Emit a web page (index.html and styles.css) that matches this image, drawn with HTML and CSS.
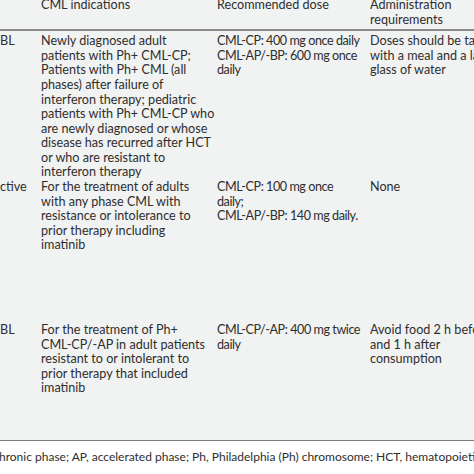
FILE: index.html
```html
<!DOCTYPE html>
<html lang="en">
<head>
<meta charset="utf-8">
<title>CML table</title>
<link rel="stylesheet" href="styles.css">
</head>
<body>
<div class="page">
  <div class="table">
    <div class="row head">
      <div class="cell"></div>
      <div class="cell">CML indications</div>
      <div class="cell">Recommended dose</div>
      <div class="cell">Administration<br>requirements</div>
    </div>
    <div class="row r1">
      <div class="cell">BL</div>
      <div class="cell">Newly diagnosed adult<br>patients with Ph+ CML-CP;<br>Patients with Ph+ CML (all<br>phases) after failure of<br>interferon therapy; pediatric<br>patients with Ph+ CML-CP who<br>are newly diagnosed or whose<br>disease has recurred after HCT<br>or who are resistant to<br>interferon therapy</div>
      <div class="cell dose">CML-CP: 400 mg once daily<br>CML-AP/-BP: 600 mg once<br>daily</div>
      <div class="cell">Doses should be taken<br>with a meal and a large<br>glass of water</div>
    </div>
    <div class="row r2">
      <div class="cell">ctive</div>
      <div class="cell">For the treatment of adults<br>with any phase CML with<br>resistance or intolerance to<br>prior therapy including<br>imatinib</div>
      <div class="cell dose">CML-CP: 100 mg once<br>daily;<br>CML-AP/-BP: 140 mg daily.</div>
      <div class="cell">None</div>
    </div>
    <div class="row r3">
      <div class="cell">BL</div>
      <div class="cell">For the treatment of Ph+<br>CML-CP/-AP in adult patients<br>resistant to or intolerant to<br>prior therapy that included<br>imatinib</div>
      <div class="cell dose">CML-CP/-AP: 400 mg twice<br>daily</div>
      <div class="cell">Avoid food 2 h before<br>and 1 h after<br>consumption</div>
    </div>
  </div>
  <p class="note">hronic phase; AP, accelerated phase; Ph, Philadelphia (Ph) chromosome; HCT, hematopoietic cell transplantation.</p>
</div>
</body>
</html>
```
FILE: styles.css
```css
html, body {
  margin: 0;
  padding: 0;
  background: #ffffff;
  overflow: hidden;
}
.page {
  width: 474px;
  height: 474px;
  overflow: hidden;
  font-family: Lato, "Noto Sans", sans-serif;
  color: #2e2e2e;
}
.table {
  background: #f1f2f2;
  width: 560px;
  margin-top: -2px;
  border-bottom: 1.5px solid #7d7d7d;
}
.row {
  display: grid;
  grid-template-columns: 41px 176px 153px 190px;
  font-size: 12.6px;
  line-height: 14.57px;
  white-space: nowrap;
}
.cell {
  overflow: hidden;
}
.dose {
  letter-spacing: -0.45px;
}
.head {
  padding-bottom: 1.7px;
  border-bottom: 2px solid #8a8a8a;
}
.r1 {
  padding-top: 3.5px;
}
.r2 {
  height: 143.3px;
}
.r3 {
  height: 116.5px;
}
.note {
  margin: 9px 0 0 -1px;
  font-size: 12px;
  line-height: 14px;
  white-space: nowrap;
  color: #2e2e2e;
}
```
